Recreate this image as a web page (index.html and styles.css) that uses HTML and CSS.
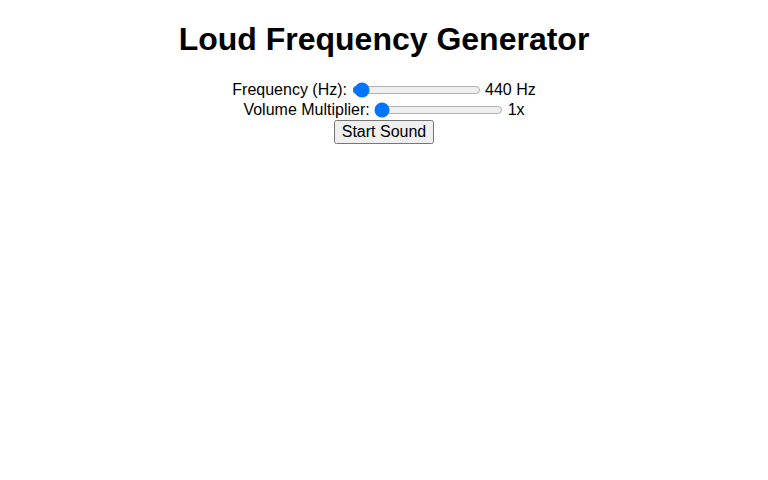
FILE: index.html
```html
<!DOCTYPE html>
<html lang="en">
<head>
    <meta charset="UTF-8">
    <meta name="viewport" content="width=device-width, initial-scale=1.0">
    <title>Loud Frequency Generator</title>
    <link rel="stylesheet" href="styles.css">
</head>
<body>
    <h1>Loud Frequency Generator</h1>
    <div class="controls">
        <div class="control-row">
            <label for="frequency">Frequency (Hz):</label>
            <input type="range" id="frequency" min="20" max="20000" value="440">
            <span id="freqValue">440 Hz</span>
        </div>
        <div class="control-row">
            <label for="volume">Volume Multiplier:</label>
            <input type="range" id="volume" min="1" max="10" value="1">
            <span id="volValue">1x</span>
        </div>
        <div class="control-row">
            <button id="toggle">Start Sound</button>
        </div>
    </div>
</body>
</html>
```

FILE: styles.css
```css
body {
    font-family: "Liberation Sans", Arial, sans-serif;
    text-align: center;
    margin: 0;
}
h1 {
    font-size: 32px;
}
.controls {
    font-size: 16px;
}
.control-row {
    display: flex;
    justify-content: center;
    align-items: center;
    gap: 2.5px;
}
.control-row button {
    font-family: "Liberation Sans", Arial, sans-serif;
    font-size: 16px;
}
```
